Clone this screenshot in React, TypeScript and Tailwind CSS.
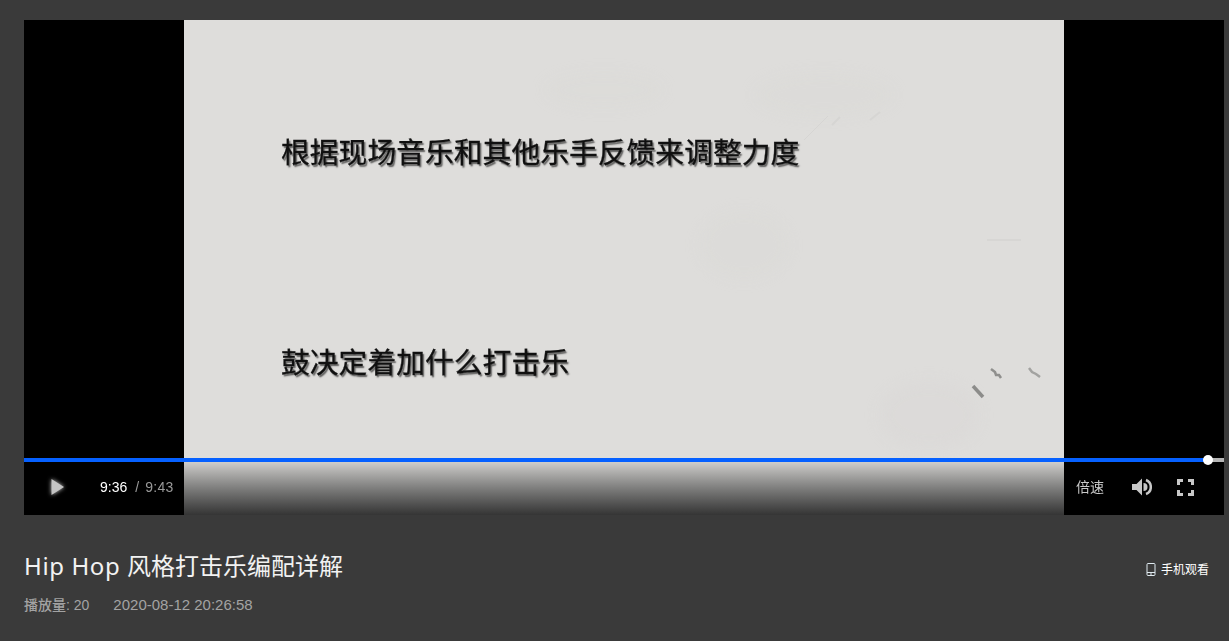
const cjk = "font-['Liberation_Sans','Noto_Sans_CJK_SC',sans-serif]";

function Specks() {
  return (
    <svg className="absolute inset-0 h-full w-full" viewBox="0 0 880 495" fill="none">
      <g className="blur-[7px]" fill="#d6d5d3">
        <ellipse cx="745" cy="395" rx="50" ry="34" opacity="0.3" />
        <ellipse cx="560" cy="225" rx="45" ry="34" opacity="0.2" />
        <ellipse cx="640" cy="75" rx="70" ry="22" opacity="0.2" />
        <ellipse cx="420" cy="70" rx="60" ry="18" opacity="0.15" />
      </g>
      <path d="M789 366l10 11" stroke="#8c8c8a" strokeWidth="3.5" />
      <path d="M807 349l4 3 1 3 3 0 2 3" stroke="#8f8f8d" strokeWidth="2.5" />
      <path d="M845 348l3 4 4 2 4 3" stroke="#a2a2a0" strokeWidth="2.5" />
      <path d="M803 220h34" stroke="#d0cfcd" />
      <path d="M620 120l24-24" stroke="#d6d5d3" />
      <path d="M648 105l8-8M686 100l10-8" stroke="#d6d5d3" strokeWidth="2" />
    </svg>
  );
}

function PlayIcon() {
  return (
    <svg width="16" height="18" viewBox="0 0 16 18" className="drop-shadow-[0_0_2px_rgba(255,255,255,0.8)]">
      <path d="M1.5 1L14 9 1.5 17z" fill="#c4c4c4" />
    </svg>
  );
}

function VolumeIcon() {
  return (
    <svg width="20" height="18" viewBox="0 0 20 18" fill="none">
      <path d="M0 6h4.5L10 0.5v17L4.5 12H0z" fill="#c8c8c8" />
      <path d="M11.5 5a4 4 0 0 1 0 8z" fill="#c8c8c8" />
      <path d="M14 2a7.5 7.5 0 0 1 0 14" stroke="#c8c8c8" strokeWidth="2.5" />
    </svg>
  );
}

function FullscreenIcon() {
  return (
    <svg width="17" height="17" viewBox="0 0 17 17" fill="none" stroke="#c8c8c8" strokeWidth="3">
      <path d="M1.5 6v-4.5H6M11 1.5h4.5V6M15.5 11v4.5H11M6 15.5H1.5V11" />
    </svg>
  );
}

function PhoneIcon() {
  return (
    <svg width="10" height="13" viewBox="0 0 10 13" fill="none">
      <rect x="1" y="0.5" width="8" height="12" rx="1" stroke="#dfeaf0" />
      <path d="M1 9.5h8" stroke="#dfeaf0" />
      <path d="M4 11h2" stroke="#dfeaf0" />
    </svg>
  );
}

function Player() {
  return (
    <div className="relative flex h-[495px] w-[1200px] justify-center bg-black">
      <div className="relative w-[880px] bg-[#dedddb]">
        <Specks />
        <div className={`relative flex flex-col gap-[174px] pl-[97px] pt-[115px] text-[28.8px] font-normal leading-[36px] text-[#101010] [-webkit-text-stroke:0.3px_#101010] [text-shadow:1.5px_1.5px_1.5px_rgba(0,0,0,0.6)] ${cjk}`}>
          <p>根据现场音乐和其他乐手反馈来调整力度</p>
          <p>鼓决定着加什么打击乐</p>
        </div>
        <div className="absolute inset-x-0 bottom-0 h-[53px] bg-gradient-to-b from-[#cfcecc] via-[#7d7d7c] to-[#353535]" />
      </div>

      <div className="absolute inset-x-0 bottom-0 flex h-[57px] flex-col">
        <div className="relative h-1 bg-[#b4b4b4]">
          <div className="h-1 w-[1184px] bg-[#0560ff]" />
          <div className="absolute left-[1179px] top-[-3px] h-[10px] w-[10px] rounded-full bg-white" />
        </div>
        <div className={`flex flex-1 items-center pb-[3px] text-[14px] ${cjk}`}>
          <div className="ml-[26px] flex w-[50px]">
            <PlayIcon />
          </div>
          <span className="text-white">9:36</span>
          <span className="ml-2 text-[#9a9a9a]">/</span>
          <span className="ml-[6px] tracking-[0.3px] text-[#9a9a9a]">9:43</span>
          <span className="ml-auto text-[14px] text-[#c8c8c8]">倍速</span>
          <div className="ml-[28px] flex">
            <VolumeIcon />
          </div>
          <div className="ml-[25px] mr-[30px] flex">
            <FullscreenIcon />
          </div>
        </div>
      </div>
    </div>
  );
}

export default function App() {
  return (
    <div className={`h-[641px] w-full overflow-hidden bg-[#3a3a3a] pl-6 pt-5 ${cjk}`}>
      <Player />
      <div className="mt-[35px] flex w-[1200px] items-center justify-between pr-[15px]">
        <h1 className="font-['Noto_Sans','Noto_Sans_CJK_SC',sans-serif] text-[24px] font-normal leading-[32px] text-[#f2f2f2]">
          <span className="tracking-[0.6px]">Hip Hop </span>
          风格打击乐编配详解
        </h1>
        <div className="mt-[7px] flex items-center gap-[5px] text-[12px] text-white">
          <PhoneIcon />
          <span>手机观看</span>
        </div>
      </div>
      <div className="mt-[13px] flex items-center gap-6 leading-[20px] text-[#a3a3a3]">
        <span className="text-[14px] font-medium">播放量: 20</span>
        <span className="text-[15px]">2020-08-12 20:26:58</span>
      </div>
    </div>
  );
}
